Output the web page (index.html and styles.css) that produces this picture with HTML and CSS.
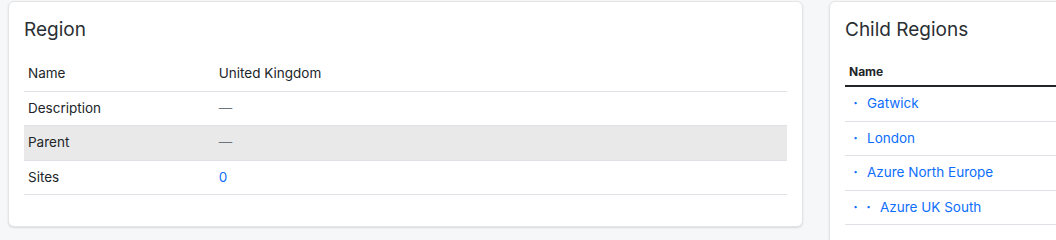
FILE: index.html
```html
<!doctype html>
<html lang="en">
<head>
<meta charset="utf-8">
<title>Region - United Kingdom</title>
<link rel="stylesheet" href="styles.css">
</head>
<body>
  <div class="row">
    <div class="card card-main">
      <h5 class="card-title">Region</h5>
      <table class="attrs">
        <tr><th>Name</th><td>United Kingdom</td></tr>
        <tr><th>Description</th><td><span class="muted">&mdash;</span></td></tr>
        <tr class="hover"><th>Parent</th><td><span class="muted">&mdash;</span></td></tr>
        <tr><th>Sites</th><td><a href="#">0</a></td></tr>
      </table>
    </div>
    <div class="card card-side">
      <h5 class="card-title">Child Regions</h5>
      <table class="list">
        <thead>
          <tr><th>Name</th></tr>
        </thead>
        <tbody>
          <tr><td><span class="dot">&middot;</span><a href="#">Gatwick</a></td></tr>
          <tr><td><span class="dot">&middot;</span><a href="#">London</a></td></tr>
          <tr><td><span class="dot">&middot;</span><a href="#">Azure North Europe</a></td></tr>
          <tr><td><span class="dot">&middot;</span><span class="dot">&middot;</span><a href="#">Azure UK South</a></td></tr>
        </tbody>
      </table>
    </div>
  </div>
</body>
</html>
```
FILE: styles.css
```css
BODY {
  margin: 0;
  padding: 1px 0 0 8px;
  background: #f6f7f9;
  color: #212529;
  font: 13.5px Inter, "Noto Sans", sans-serif;
  overflow: hidden;
}
A {
  color: #0d6efd;
  text-decoration: none;
}
A:hover {
  text-decoration: underline;
}
.row {
  display: flex;
  gap: 26px;
  align-items: flex-start;
}
.card {
  flex: none;
  background: #fff;
  border: 1px solid #e3e4e6;
  border-radius: 6px;
  box-shadow: 0 1px 2px rgba(0, 0, 0, 0.12);
  padding: 17px 15px 15px 15px;
}
.card-main {
  width: 763px;
}
.card-side {
  width: 400px;
}
.card-title {
  margin: 0 0 16px 0;
  font-size: 19px;
  line-height: 22px;
  font-weight: 400;
  color: #2b2f33;
}
TABLE {
  width: 100%;
  border-collapse: collapse;
  margin-bottom: 16px;
}
.attrs TH,
.attrs TD {
  text-align: left;
  font-weight: 400;
  padding: 8px 4px;
  line-height: 17.5px;
  border-bottom: 1px solid #dee2e6;
}
.attrs TH {
  width: 25%;
}
.attrs .hover TH,
.attrs .hover TD {
  background: #e9e9e9;
}
.muted {
  color: #6c757d;
}
.list TH {
  text-align: left;
  font-size: 12px;
  font-weight: 700;
  padding: 7px 4px 5px 4px;
  line-height: 16px;
  border-bottom: 2px solid #212529;
}
.list TD {
  padding: 8px 4px;
  line-height: 17.5px;
  border-bottom: 1px solid #dee2e6;
}
.dot {
  display: inline-block;
  width: 13px;
  text-align: center;
  font-weight: 700;
  color: #0d6efd;
}
.dot:last-of-type {
  margin-right: 5px;
}
```
